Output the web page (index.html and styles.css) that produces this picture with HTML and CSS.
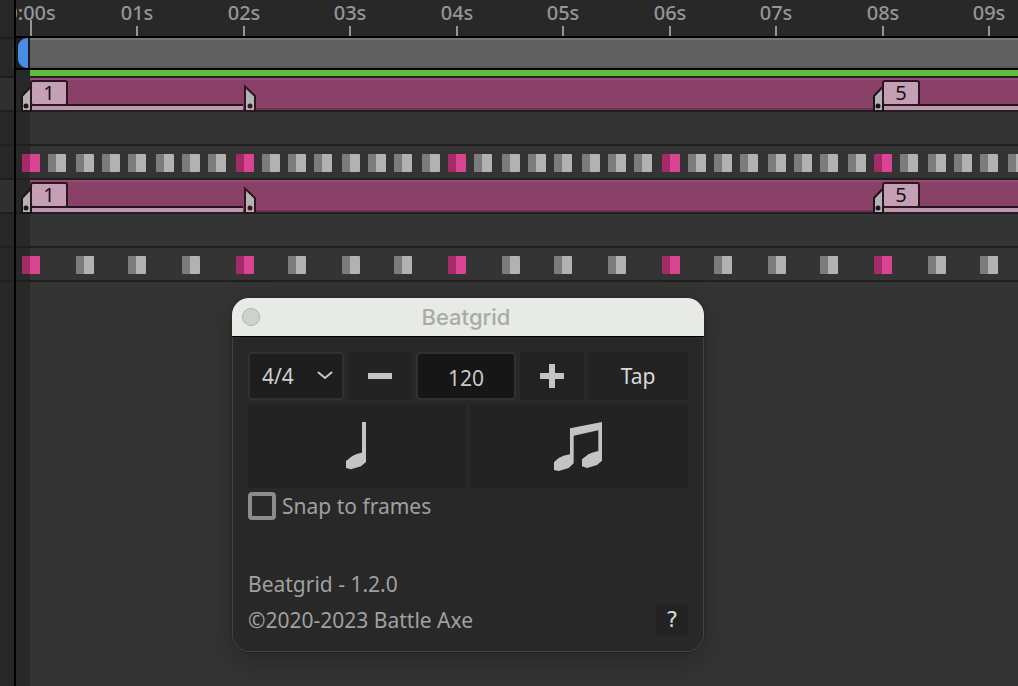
FILE: index.html
```
<!DOCTYPE html>
<html lang="en">
<head>
<meta charset="utf-8">
<title>Beatgrid</title>
<link rel="stylesheet" href="styles.css">
</head>
<body>
<svg class="defs" aria-hidden="true">
  <symbol id="handle-in" viewBox="0 0 12 28">
    <path d="M2 27V12L11 2.500V27Z" fill="#b4b4b4" stroke="#1c1418" stroke-width="2"/><circle cx="6" cy="22" r="2.500" fill="#1c1418"/>
  </symbol>
  <symbol id="handle-out" viewBox="0 0 12 28">
    <path d="M1 27V2.500L11 12V27Z" fill="#b4b4b4" stroke="#2c1422" stroke-width="2"/><circle cx="6" cy="22" r="2.500" fill="#3c1428"/>
  </symbol>
</svg>
<main class="timeline">
  <div class="gutter">
    <div class="gutter-ruler"></div>
    <div class="gutter-work"></div>
    <div class="row row-lit"></div>
    <div class="row"></div>
    <div class="row"></div>
    <div class="row row-lit"></div>
    <div class="row"></div>
    <div class="row"></div>
  </div>
  <div class="tracks">
    <div class="ruler" id="ruler"></div>
    <div class="work-area"><div class="work-handle"></div><div class="work-bar"></div></div>
    <div class="cache"></div>
    <div class="row clip-row"></div>
    <div class="row"></div>
    <div class="row key-row" data-step="0.25" data-accent="8"></div>
    <div class="row clip-row"></div>
    <div class="row"></div>
    <div class="row key-row" data-step="0.5" data-accent="4"></div>
  </div>
</main>

<section class="panel" aria-label="Beatgrid">
  <header class="titlebar"><button class="close" aria-label="Close"></button><h1>Beatgrid</h1></header>
  <div class="body">
    <div class="controls">
      <div class="select-wrap">
        <select aria-label="Time signature"><option>4/4</option><option>3/4</option></select>
        <svg class="chevron" viewBox="0 0 16 9" width="16" height="9"><path d="M1.500 1.500L8 7L14.500 1.500" fill="none" stroke="#c8c8c8" stroke-width="2" stroke-linecap="round"/></svg>
      </div>
      <button class="btn" aria-label="Decrease tempo"><svg width="24" height="24"><path d="M0 9H24V15H0Z" fill="#c4c4c4"/></svg></button>
      <input class="tempo" type="text" value="120" aria-label="Tempo">
      <button class="btn" aria-label="Increase tempo"><svg width="24" height="24"><path d="M0 9H9V0H15V9H24V15H15V24H9V15H0Z" fill="#c4c4c4"/></svg></button>
      <button class="btn">Tap</button>
    </div>
    <div class="notes">
      <button class="btn" aria-label="Quarter notes"><svg width="22" height="48" viewBox="363 66 66 144"><path d="M366 183L385 168Q400 159 414 158V66H426V186L411 199L381 208L366 204Z" fill="#c4c4c4"/></svg></button>
      <button class="btn" aria-label="Eighth notes"><svg width="48" height="49" viewBox="282 66 144 147"><path fill-rule="evenodd" d="M330 85L426 66V182L411 195L381 204L366 199V178L385 163Q400 155 415 153V91L341 107V190L326 204L296 213L282 210V187L296 174Q312 165 330 163Z" fill="#c4c4c4"/></svg></button>
    </div>
    <label class="snap"><input type="checkbox"><span>Snap to frames</span></label>
    <footer class="about">
      <p>Beatgrid - 1.2.0<br>©2020-2023 Battle Axe</p>
      <button class="btn help" aria-label="Help">?</button>
    </footer>
  </div>
</section>
<script src="timeline.js"></script>
</body>
</html>
```
FILE: styles.css
```
* { box-sizing: border-box; }
body {
  margin: 0;
  background: #343434;
  font-family: "Noto Sans", sans-serif;
  color: #a0a0a0;
}
h1, p { margin: 0; }
button, input, select { font: inherit; color: inherit; margin: 0; padding: 0; border: 0; }
svg { display: block; }
.defs { position: absolute; width: 0; height: 0; }

.timeline { display: flex; min-height: 100vh; overflow: hidden; }
.gutter {
  flex: 0 0 16px;
  background: #272727;
  border-right: 2px solid #000;
}
.gutter-ruler { height: 39px; border-bottom: 2px solid #1e1e1e; }
.gutter-work {
  height: 39px;
  border-bottom: 2px solid #1e1e1e;
  background: linear-gradient(#333, #333) right center / 2px 22px no-repeat;
}
.row { height: 34px; border-bottom: 2px solid #202020; }
.row-lit { background: #303030; }
.tracks {
  flex: 1;
  min-width: 0;
  overflow: hidden;
  background: linear-gradient(to right, #282828 14px, #343434 14px);
}
.ruler {
  position: relative;
  height: 38px;
  background: #282828;
  border-bottom: 2px solid #000;
}
.mark {
  position: absolute;
  top: 0;
  bottom: 0;
  width: 80px;
  margin-left: -40px;
  display: flex;
  flex-direction: column;
  align-items: center;
  justify-content: space-between;
  font: 500 20px/26px "Noto Sans", sans-serif;
  color: #969696;
}
.mark::after { content: ""; width: 2px; height: 10px; background: #969696; }
.mark.origin::after { height: 16px; margin-top: -6px; }
.work-area {
  display: flex;
  height: 32px;
  padding-left: 2px;
  gap: 2px;
  background: #1c1c1c;
  border-bottom: 2px solid #000;
}
.work-handle { width: 10px; background: #4a8de6; border-radius: 9px 0 0 9px; }
.work-bar { flex: 1; background: #616161; border-top: 2px solid #757575; border-bottom: 2px solid #575757; }
.cache { height: 8px; margin-left: 14px; background: #5abe41; border-bottom: 2px solid #222; }

.clip-row {
  position: relative;
  background: linear-gradient(#934b70, #934b70) 14px 0 / 100% 2px no-repeat,
    linear-gradient(#702f54, #702f54) 14px 30px / 100% 2px no-repeat,
    linear-gradient(#8a4167, #8a4167) 14px 0 no-repeat;
}
.span {
  position: absolute;
  top: 26px;
  bottom: 0;
  background: #c098ae;
  border-top: 2px solid #24121c;
}
.tag {
  position: absolute;
  top: 2px;
  width: 38px;
  height: 26px;
  background: #c5a0b5;
  border: 2px solid #2c1622;
  border-radius: 3px;
  font: 20px/22px "Noto Sans", sans-serif;
  text-align: center;
  color: #151015;
}
.handle { position: absolute; top: 6px; width: 12px; height: 28px; }

.key-row { position: relative; }
.key {
  position: absolute;
  top: 8px;
  width: 18px;
  height: 18px;
  border-radius: 1px;
  background: linear-gradient(to right, #7c7c7c 8px, #b2b2b2 8px);
}
.key.accent { background: linear-gradient(to right, #a42a68 8px, #da4593 8px); }

.panel {
  position: absolute;
  left: 232px;
  top: 298px;
  width: 472px;
  border-radius: 17px;
  background: #282828;
  box-shadow: inset 0 0 0 1px #434343, 0 0 2px #1c1c1c, 0 8px 28px rgba(0, 0, 0, 0.25);
  font-size: 21px;
}
.titlebar {
  position: relative;
  display: flex;
  align-items: center;
  height: 39px;
  padding: 0 10px;
  background: #e8eae6;
  border-bottom: 1px solid #000;
  border-radius: 17px 17px 0 0;
}
.titlebar h1 {
  flex: 1;
  margin-right: 22px;
  font: 500 22px/36px Inter, sans-serif;
  text-align: center;
  color: #a9aba8;
}
.close {
  width: 18px;
  height: 18px;
  border: 1px solid #b0b2af;
  border-radius: 50%;
  background: #cfd1cd;
}
.body { padding: 15px 16px 16px; }
.controls { display: grid; grid-template-columns: 96px 64px 100px 64px 1fr; gap: 4px; height: 48px; }
.notes { display: grid; grid-template-columns: 1fr 1fr; gap: 4px; height: 84px; margin: 4px 0; }
.btn {
  display: flex;
  align-items: center;
  justify-content: center;
  background: #232323;
  color: #d8d8d8;
}
.notes .btn { padding-right: 2px; }
.select-wrap { position: relative; display: flex; }
.select-wrap select, .tempo {
  width: 100%;
  border: 2px solid #303030;
  border-radius: 4px;
  background: #1d1d1d;
  color: #cfcfcf;
}
.select-wrap select { appearance: none; padding-left: 12px; }
.chevron { position: absolute; right: 11px; top: 19px; pointer-events: none; }
.tempo { background: #161616; text-align: center; padding-top: 4px; color: #c8c8c8; }
.snap { display: flex; align-items: center; gap: 6px; height: 28px; }
.snap input {
  appearance: none;
  width: 28px;
  height: 28px;
  border: 4px solid #8c8c8c;
  border-radius: 4px;
}
.about { display: flex; justify-content: space-between; align-items: flex-end; margin-top: 46px; line-height: 36px; }
.help { width: 32px; height: 32px; font: 400 22px/32px "DejaVu Sans", sans-serif; }
.about p { margin-bottom: -2px; }
```
FILE: timeline.js
```
const ORIGIN = 14;
const PER_SECOND = 106.5;
const SECONDS = 10;

function add(parent, className, left, text) {
  const el = document.createElement("div");
  el.className = className;
  el.style.left = left + "px";
  if (text) el.textContent = text;
  parent.append(el);
  return el;
}

const ruler = document.getElementById("ruler");
for (let s = 0; s < SECONDS; s++) {
  add(ruler, s ? "mark" : "mark origin", Math.floor(ORIGIN + 1 + s * PER_SECOND), s ? "0" + s + "s" : "0:00s");
}

function handle(row, kind, left) {
  row.insertAdjacentHTML("beforeend",
    `<svg class="handle" style="left:${left}px"><use href="#handle-${kind}"/></svg>`);
}

document.querySelectorAll(".clip-row").forEach(row => {
  add(row, "span", ORIGIN).style.width = 2 * PER_SECOND + "px";
  add(row, "span", ORIGIN + 8 * PER_SECOND).style.right = "0";
  handle(row, "in", ORIGIN - 10);
  handle(row, "out", ORIGIN + 2 * PER_SECOND + 1);
  handle(row, "in", ORIGIN + 8 * PER_SECOND - 10);
  add(row, "tag", ORIGIN, "1");
  add(row, "tag", ORIGIN + 8 * PER_SECOND, "5");
});

document.querySelectorAll(".key-row").forEach(row => {
  const step = Number(row.dataset.step);
  const accent = Number(row.dataset.accent);
  for (let i = 0; i * step < SECONDS; i++) {
    const left = 2 * Math.round((ORIGIN - 8 + i * step * PER_SECOND) / 2);
    add(row, i % accent ? "key" : "key accent", left);
  }
});
```
